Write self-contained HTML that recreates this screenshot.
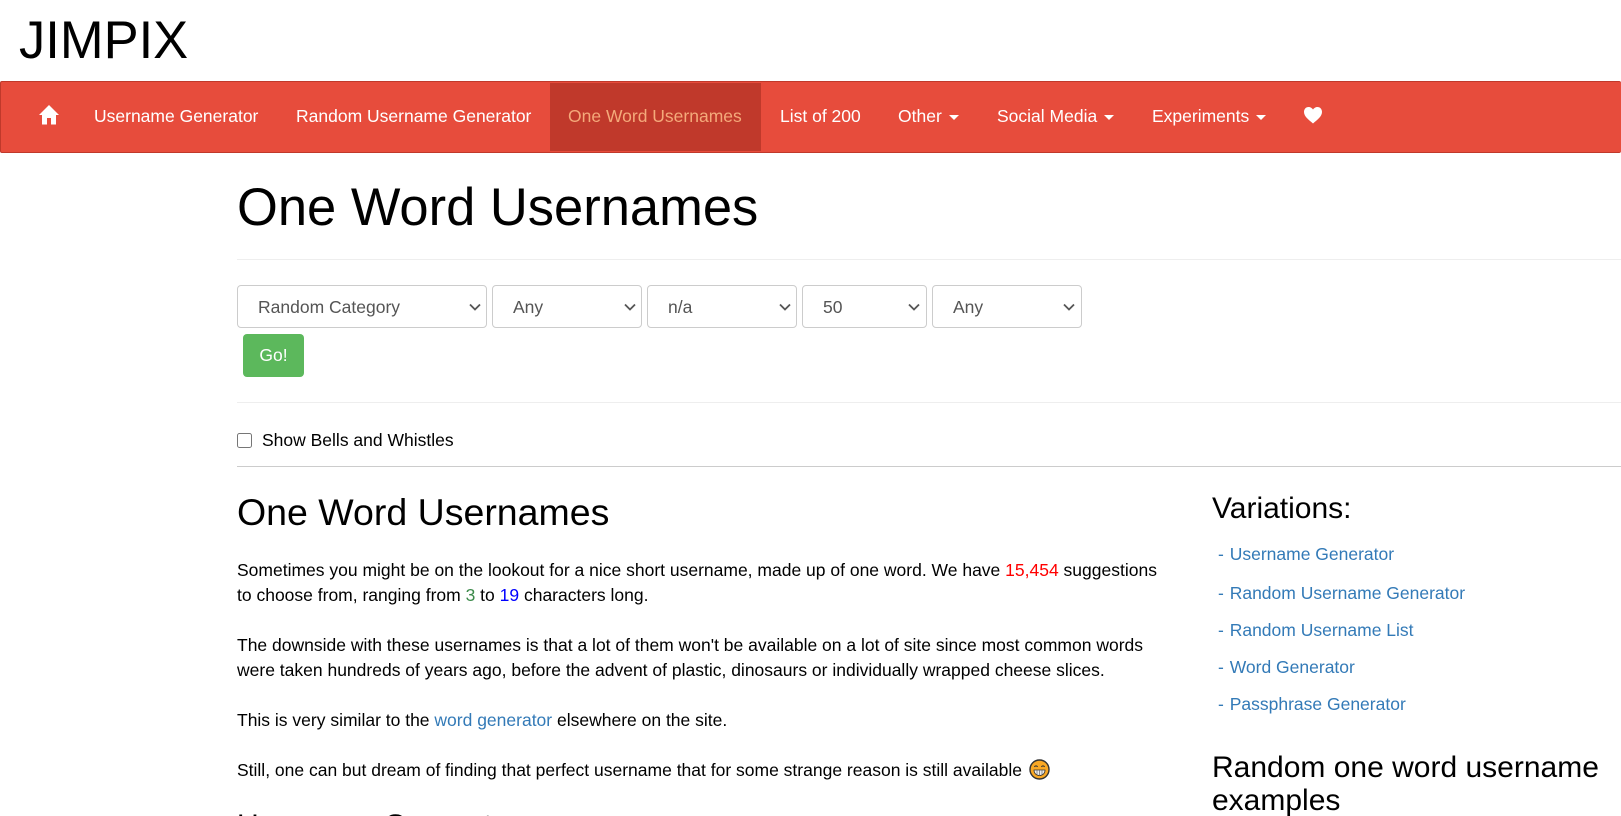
<!DOCTYPE html>
<html lang="en">
<head>
<meta charset="utf-8">
<title>One Word Usernames</title>
<style>
html,body{margin:0;padding:0;background:#fff;width:1621px;height:816px;overflow:hidden}
body{position:relative;font-family:"Liberation Sans",Arial,sans-serif;color:#000;font-size:17.5px}
.t{position:absolute;white-space:nowrap;line-height:1;margin:0;font-weight:400}
a{color:#337ab7;text-decoration:none}
.nav{position:absolute;left:0;top:81px;width:1621px;height:72px;box-sizing:border-box;background:#e74c3c;border:1px solid #c0392b;border-right:0;border-radius:2px}
.active{position:absolute;left:550px;top:83px;width:211px;height:68px;background:#c0392b}
.n{color:#fff}
.caret{position:absolute;top:115px;width:0;height:0;border-left:5px solid transparent;border-right:5px solid transparent;border-top:5px solid #fff}
.hr{position:absolute;left:237px;width:1384px;height:1px;background:#eee}
select{position:absolute;top:285px;height:43px;box-sizing:border-box;background:#fff;border:1px solid #ccc;border-radius:4px;color:#555;font:17.5px "Liberation Sans",Arial,sans-serif;padding:0 0 0 20px;margin:0;appearance:none;-webkit-appearance:none}
.chev{position:absolute;top:303px;pointer-events:none}
.go{position:absolute;left:243px;top:334px;width:61px;height:43px;background:#5cb85c;border-radius:4px;color:#fff;text-align:center;line-height:42px;font-size:17.5px}
.cb{position:absolute;left:237px;top:433px;width:15px;height:15px;margin:0}
.d{color:#337ab7}
.s a{margin-left:1px}
</style>
</head>
<body>
<div class="t" style="left:19px;top:11px;font-size:52.500px;line-height:60px">JIMPIX</div>

<div class="nav"></div>
<div class="active"></div>
<svg style="position:absolute;left:38px;top:104px" width="22" height="21" viewBox="0 0 22 21"><path d="M11 1 21 11H18V20.500H13V14H9V20.500H4V11H1Z" fill="#fff"/></svg>
<a class="t n" href="#" style="left:94px;top:106px;line-height:20px">Username Generator</a>
<a class="t n" href="#" style="left:296px;top:106px;line-height:20px">Random Username Generator</a>
<a class="t" href="#" style="left:568px;top:106px;line-height:20px;color:#f4a97a">One Word Usernames</a>
<a class="t n" href="#" style="left:780px;top:106px;line-height:20px">List of 200</a>
<a class="t n" href="#" style="left:898px;top:106px;line-height:20px">Other</a><span class="caret" style="left:949px"></span>
<a class="t n" href="#" style="left:997px;top:106px;line-height:20px">Social Media</a><span class="caret" style="left:1104px"></span>
<a class="t n" href="#" style="left:1152px;top:106px;line-height:20px">Experiments</a><span class="caret" style="left:1256px"></span>
<svg style="position:absolute;left:1303px;top:106px" width="20" height="18" viewBox="0 0 20 18"><path d="M10 17.500C6 14 1 10.500 1 6 1 3 3 1 5.500 1 7.500 1 9 2 10 3.500 11 2 12.500 1 14.500 1 17 1 19 3 19 6 19 10.500 14 14 10 17.500Z" fill="#fff"/></svg>

<h1 class="t" style="left:237px;top:178px;font-size:52.500px;line-height:60px">One Word Usernames</h1>
<div class="hr" style="top:259px"></div>

<select style="left:237px;width:250px"><option>Random Category</option></select>
<select style="left:492px;width:150px"><option>Any</option></select>
<select style="left:647px;width:150px"><option>n/a</option></select>
<select style="left:802px;width:125px"><option>50</option></select>
<select style="left:932px;width:150px"><option>Any</option></select>
<svg class="chev" style="left:469px" width="12" height="8" viewBox="0 0 12 8"><path d="M1 1.500 6 6.500 11 1.500" fill="none" stroke="#555" stroke-width="1.800"/></svg>
<svg class="chev" style="left:624px" width="12" height="8" viewBox="0 0 12 8"><path d="M1 1.500 6 6.500 11 1.500" fill="none" stroke="#555" stroke-width="1.800"/></svg>
<svg class="chev" style="left:779px" width="12" height="8" viewBox="0 0 12 8"><path d="M1 1.500 6 6.500 11 1.500" fill="none" stroke="#555" stroke-width="1.800"/></svg>
<svg class="chev" style="left:908px" width="12" height="8" viewBox="0 0 12 8"><path d="M1 1.500 6 6.500 11 1.500" fill="none" stroke="#555" stroke-width="1.800"/></svg>
<svg class="chev" style="left:1063px" width="12" height="8" viewBox="0 0 12 8"><path d="M1 1.500 6 6.500 11 1.500" fill="none" stroke="#555" stroke-width="1.800"/></svg>
<a class="go" href="#">Go!</a>
<div class="hr" style="top:402px"></div>

<input class="cb" type="checkbox">
<div class="t" style="left:262px;top:430px;line-height:20px">Show Bells and Whistles</div>
<div class="hr" style="top:466px;height:1px;background:#ccc"></div>

<h2 class="t" style="left:237px;top:490px;font-size:37.500px;line-height:44px">One Word Usernames</h2>
<div class="t" style="left:237px;top:558px;line-height:25px">Sometimes you might be on the lookout for a nice short username, made up of one word. We have <span style="color:#f00">15,454</span> suggestions</div>
<div class="t" style="left:237px;top:583px;line-height:25px">to choose from, ranging from <span style="color:#3c8a4a">3</span> to <span style="color:#00f">19</span> characters long.</div>
<div class="t" style="left:237px;top:633px;line-height:25px">The downside with these usernames is that a lot of them won't be available on a lot of site since most common words</div>
<div class="t" style="left:237px;top:658px;line-height:25px">were taken hundreds of years ago, before the advent of plastic, dinosaurs or individually wrapped cheese slices.</div>
<div class="t" style="left:237px;top:708px;line-height:25px">This is very similar to the <a href="#">word generator</a> elsewhere on the site.</div>
<div class="t" style="left:237px;top:758px;line-height:25px">Still, one can but dream of finding that perfect username that for some strange reason is still available</div>
<svg style="position:absolute;left:1029px;top:759px" width="21" height="21" viewBox="0 0 21 21"><circle cx="10.500" cy="10.500" r="9.500" fill="#f9a825" stroke="#333" stroke-width="1.400"/><path d="M5 11H16C16 14.500 13.500 16.500 10.500 16.500 7.500 16.500 5 14.500 5 11Z" fill="#eee" stroke="#333" stroke-width=".8"/><path d="M8 11V16M10.500 11V16.500M13 11V16" stroke="#666" stroke-width=".7" fill="none"/><path d="M5.500 8C6 6.500 8 6.500 8.500 8M12.500 8C13 6.500 15 6.500 15.500 8" stroke="#333" stroke-width="1.100" fill="none"/></svg>
<h3 class="t" style="left:237px;top:808px;font-size:30px;line-height:36px">Username Generator</h3>

<h3 class="t" style="left:1212px;top:491px;font-size:30px;line-height:36px">Variations:</h3>
<div class="t s" style="left:1218px;top:544px;line-height:20px"><span class="d">-</span> <a href="#">Username Generator</a></div>
<div class="t s" style="left:1218px;top:583px;line-height:20px"><span class="d">-</span> <a href="#">Random Username Generator</a></div>
<div class="t s" style="left:1218px;top:620px;line-height:20px"><span class="d">-</span> <a href="#">Random Username List</a></div>
<div class="t s" style="left:1218px;top:657px;line-height:20px"><span class="d">-</span> <a href="#">Word Generator</a></div>
<div class="t s" style="left:1218px;top:694px;line-height:20px"><span class="d">-</span> <a href="#">Passphrase Generator</a></div>
<h3 class="t" style="left:1212px;top:751px;font-size:30px;line-height:33px">Random one word username</h3>
<h3 class="t" style="left:1212px;top:784px;font-size:30px;line-height:33px">examples</h3>
</body>
</html>
